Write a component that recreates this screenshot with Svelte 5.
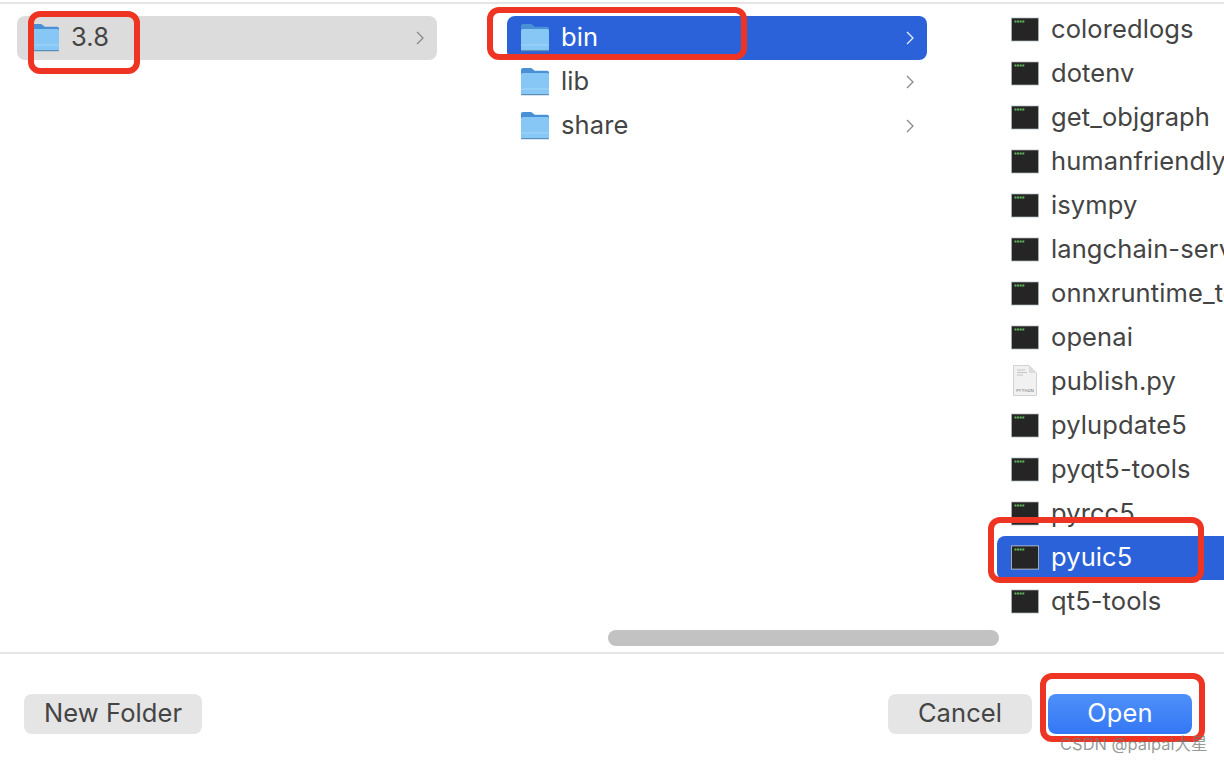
<script lang="ts">
  type Row = { name: string; kind: "folder" | "exec" | "doc"; selected?: "active" | "muted"; more?: boolean };

  const columns: Row[][] = [
    [{ name: "3.8", kind: "folder", selected: "muted", more: true }],
    [
      { name: "bin", kind: "folder", selected: "active", more: true },
      { name: "lib", kind: "folder", more: true },
      { name: "share", kind: "folder", more: true },
    ],
    [
      { name: "coloredlogs", kind: "exec" },
      { name: "dotenv", kind: "exec" },
      { name: "get_objgraph", kind: "exec" },
      { name: "humanfriendly", kind: "exec" },
      { name: "isympy", kind: "exec" },
      { name: "langchain-server", kind: "exec" },
      { name: "onnxruntime_test", kind: "exec" },
      { name: "openai", kind: "exec" },
      { name: "publish.py", kind: "doc" },
      { name: "pylupdate5", kind: "exec" },
      { name: "pyqt5-tools", kind: "exec" },
      { name: "pyrcc5", kind: "exec" },
      { name: "pyuic5", kind: "exec", selected: "active" },
      { name: "qt5-tools", kind: "exec" },
    ],
  ];
</script>

<div class="dialog">
  <div class="browser">
    {#each columns as rows}
      <div class="column">
        {#each rows as row}
          <div class="row {row.selected ?? ''}">
            {#if row.kind === "folder"}
              <svg class="icon" viewBox="0 0 30 30" width="30" height="30" aria-hidden="true">
                <path d="M1 3C1 1.800 1.800 1 3 1h7.500c.9 0 1.500.3 2.100.9l1.500 1.400c.4.4.8.5 1.400.5H27c1.200 0 2 .8 2 2V12H1z" fill="#4a90d4" />
                <path d="M1 7.800C1 6.800 1.800 6 2.800 6h24.400c1 0 1.800.8 1.800 1.800V26c0 1-.8 1.800-1.800 1.800H2.800C1.800 27.800 1 27 1 26z" fill="#86c7f5" />
                <rect x="1" y="21.500" width="28" height="1" fill="#a4d6f8" />
                <rect x="1" y="27" width="28" height="1.200" rx=".6" fill="#5b8fb8" />
              </svg>
            {:else if row.kind === "exec"}
              <svg class="icon" viewBox="0 0 30 30" width="30" height="30" aria-hidden="true">
                <rect x="1" y="2.500" width="28" height="24" fill="#c4ccd0" />
                <rect x="1.800" y="3.300" width="26.400" height="22.400" fill="#252525" />
                <path d="M4.500 6.500h10" stroke="#62b85e" stroke-width="2" stroke-dasharray="2 .6" />
              </svg>
            {:else}
              <svg class="icon" viewBox="0 0 30 30" width="30" height="30" aria-hidden="true">
                <path d="M3.500 -1.500H19L26.500 6V28.500H3.500z" fill="#f1f1f1" stroke="#d2d2d2" />
                <path d="M19 -1.500V6h7.500z" fill="#dcdcdc" />
                <path d="M7 3h8M7 5.500h10M7 8h6" stroke="#c4c4c4" />
                <text x="15" y="25" class="doc-label">PYTHON</text>
              </svg>
            {/if}
            <span class="name">{row.name}</span>
            {#if row.more}
              <svg class="chevron" viewBox="0 0 8 14" width="8" height="14" aria-hidden="true">
                <path d="M1 1l6 6-6 6" fill="none" stroke="currentColor" stroke-width="1.300" />
              </svg>
            {/if}
          </div>
        {/each}
      </div>
    {/each}
  </div>

  <div class="footer">
    <button type="button" class="btn">New Folder</button>
    <div class="actions">
      <button type="button" class="btn">Cancel</button>
      <button type="button" class="btn primary">Open</button>
    </div>
  </div>

  <!-- horizontal overlay scrollbar -->
  <div class="scrollbar"></div>

  <!-- red annotation boxes drawn over the screenshot -->
  <div class="mark mark-a"></div>
  <div class="mark mark-b"></div>
  <div class="mark mark-c"></div>
  <div class="mark mark-d"></div>

  <div class="watermark">CSDN @paipai大星</div>
</div>

<style>
  :global(body) {
    background: #fff;
  }
  .dialog {
    position: relative;
    width: 1224px;
    height: 762px;
    overflow: hidden;
    background: #fff;
    font-family: Inter, "Noto Sans CJK SC", sans-serif;
    color: #444;
  }
  .browser {
    display: flex;
    height: 648px;
    margin-top: 2px;
    border-top: 2px solid #e5e5e5;
    border-bottom: 2px solid #e5e5e5;
    overflow: hidden;
    box-sizing: content-box;
  }
  .column {
    flex: 0 0 490px;
    box-sizing: border-box;
    padding: 12px 0 0 17px;
  }
  /* last column is scrolled down a little */
  .column:last-child {
    padding-top: 4px;
  }
  .row {
    display: flex;
    align-items: center;
    width: 420px;
    height: 44px;
    padding: 0 13px;
    box-sizing: border-box;
    border-radius: 8px;
    font-size: 25.5px;
    letter-spacing: 0.1px;
  }
  .column:last-child .row {
    width: 300px;
  }
  .row.muted {
    background: #dcdcdc;
  }
  .row.active {
    background: #2b62d9;
    color: #fff;
  }
  .icon {
    flex: none;
    margin-right: 11px;
    overflow: visible;
  }
  .name {
    flex: 1;
    white-space: nowrap;
    padding-bottom: 3px;
  }
  .chevron {
    flex: none;
    color: #8a8a8a;
  }
  .row.active .chevron {
    color: #e8eefc;
  }
  .doc-label {
    font-size: 4px;
    fill: #666;
    text-anchor: middle;
    font-family: Inter, sans-serif;
  }
  .footer {
    display: flex;
    justify-content: space-between;
    padding: 40px 32px 0 24px;
  }
  .actions {
    display: flex;
    gap: 16px;
  }
  .btn {
    height: 40px;
    padding: 0 20px 3px;
    border: 0;
    border-radius: 8px;
    background: #e5e5e5;
    color: #444;
    font: 25.5px Inter, sans-serif;
    letter-spacing: 0.1px;
  }
  .actions .btn {
    width: 144px;
    padding: 0 0 3px;
  }
  .btn.primary {
    background: linear-gradient(#4e90f8, #3477f5);
    color: #fff;
  }
  .scrollbar {
    position: absolute;
    left: 608px;
    top: 630px;
    width: 391px;
    height: 16px;
    border-radius: 8px;
    background: #c2c2c2;
  }
  .mark {
    position: absolute;
    box-sizing: border-box;
    border: 6px solid #ee3524;
    border-radius: 12px;
  }
  .mark-a {
    left: 28px;
    top: 11px;
    width: 112px;
    height: 63px;
  }
  .mark-b {
    left: 487px;
    top: 7px;
    width: 260px;
    height: 53px;
  }
  .mark-c {
    left: 988px;
    top: 517px;
    width: 216px;
    height: 66px;
  }
  .mark-d {
    left: 1040px;
    top: 673px;
    width: 165px;
    height: 69px;
  }
  .watermark {
    position: absolute;
    left: 1060px;
    top: 734px;
    font-size: 16.5px;
    line-height: 20px;
    white-space: nowrap;
    color: rgba(120, 120, 120, 0.75);
  }
</style>
